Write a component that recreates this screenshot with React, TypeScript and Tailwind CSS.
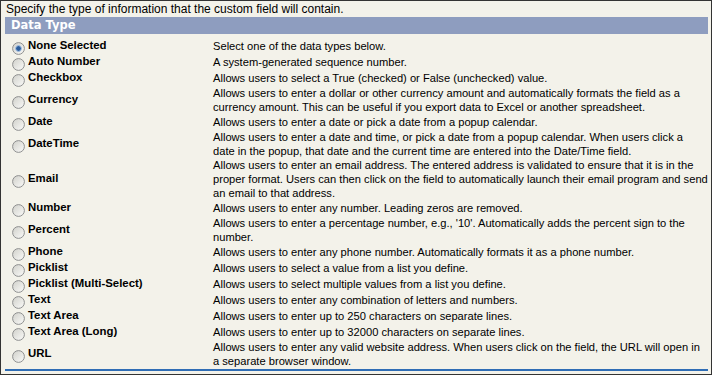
type DataType = {
  label: string;
  lines: string[];
  checked?: boolean;
};

const dataTypes: DataType[] = [
  { label: "None Selected", lines: ["Select one of the data types below."], checked: true },
  { label: "Auto Number", lines: ["A system-generated sequence number."] },
  { label: "Checkbox", lines: ["Allows users to select a True (checked) or False (unchecked) value."] },
  {
    label: "Currency",
    lines: [
      "Allows users to enter a dollar or other currency amount and automatically formats the field as a",
      "currency amount. This can be useful if you export data to Excel or another spreadsheet.",
    ],
  },
  { label: "Date", lines: ["Allows users to enter a date or pick a date from a popup calendar."] },
  {
    label: "DateTime",
    lines: [
      "Allows users to enter a date and time, or pick a date from a popup calendar. When users click a",
      "date in the popup, that date and the current time are entered into the Date/Time field.",
    ],
  },
  {
    label: "Email",
    lines: [
      "Allows users to enter an email address. The entered address is validated to ensure that it is in the",
      "proper format. Users can then click on the field to automatically launch their email program and send",
      "an email to that address.",
    ],
  },
  { label: "Number", lines: ["Allows users to enter any number. Leading zeros are removed."] },
  {
    label: "Percent",
    lines: [
      "Allows users to enter a percentage number, e.g., '10'. Automatically adds the percent sign to the",
      "number.",
    ],
  },
  { label: "Phone", lines: ["Allows users to enter any phone number. Automatically formats it as a phone number."] },
  { label: "Picklist", lines: ["Allows users to select a value from a list you define."] },
  { label: "Picklist (Multi-Select)", lines: ["Allows users to select multiple values from a list you define."] },
  { label: "Text", lines: ["Allows users to enter any combination of letters and numbers."] },
  { label: "Text Area", lines: ["Allows users to enter up to 250 characters on separate lines."] },
  { label: "Text Area (Long)", lines: ["Allows users to enter up to 32000 characters on separate lines."] },
  {
    label: "URL",
    lines: [
      "Allows users to enter any valid website address. When users click on the field, the URL will open in",
      "a separate browser window.",
    ],
  },
];

function Radio({ checked }: { checked?: boolean }) {
  return (
    <svg width="13" height="13" viewBox="0 0 13 13" className="mt-[4px] ml-[11px] shrink-0" aria-hidden>
      <defs>
        <linearGradient id="radio-fill" x1="0" y1="0" x2="1" y2="1">
          <stop offset="0" stopColor="#d0d0ca" />
          <stop offset="1" stopColor="#fbfbf9" />
        </linearGradient>
      </defs>
      <circle cx="6.5" cy="6.5" r="5.9" fill="url(#radio-fill)" stroke="#8f9090" strokeWidth="1" />
      {checked && <circle cx="6.5" cy="6.5" r="2.9" fill="#2b5d9c" stroke="#a8c4e6" strokeWidth="1" />}
    </svg>
  );
}

export default function App() {
  return (
    <div className="h-[375px] w-[712px] overflow-hidden border border-[#333333] bg-[#f3f2ea] font-['Liberation_Sans',Arial,sans-serif] text-[12px] text-black">
      <p className="h-[16px] pl-[5px] leading-[16px]">
        Specify the type of information that the custom field will contain.
      </p>

      <div className="ml-[4px] mr-[3px] flex h-[17px] items-center bg-[#8e9dbf] pl-[6px]">
        <h3 className="font-['DejaVu_Sans',Verdana,sans-serif] text-[11.5px] font-bold text-white">Data Type</h3>
      </div>

      <div className="mt-[4px] flex flex-col">
        {dataTypes.map((t) => (
          <div key={t.label} className={t.lines.length === 1 ? "flex h-[16px]" : "flex"}>
            <div className="flex w-[212px] shrink-0 items-center">
              <Radio checked={t.checked} />
              <span className="mb-[2px] ml-[3px] whitespace-nowrap text-[11.4px] font-bold leading-[14px]">
                {t.label}
              </span>
            </div>
            <div className="flex flex-col justify-center text-[11.15px]">
              {t.lines.map((line) => (
                <div key={line} className="h-[14px] whitespace-nowrap leading-[14px]">
                  {line}
                </div>
              ))}
            </div>
          </div>
        ))}
      </div>

      <div className="ml-[4px] mr-[3px] mt-[1px] h-[2px] bg-[#2f6db5]" />
    </div>
  );
}
